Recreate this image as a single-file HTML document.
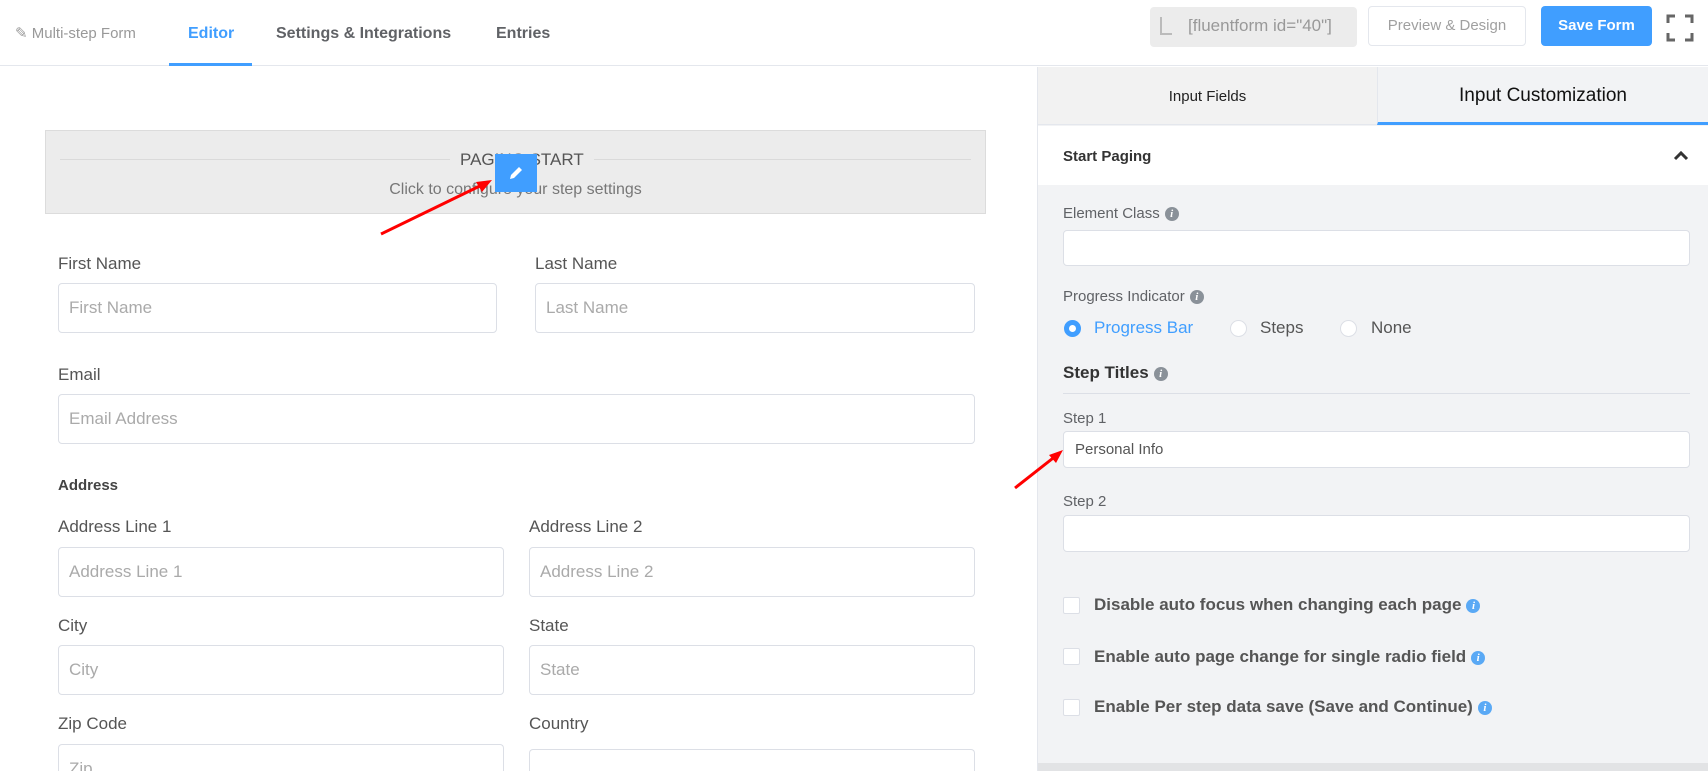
<!DOCTYPE html>
<html style="width:1708px;height:771px;overflow:hidden"><head><meta charset="utf-8"><style>
*{box-sizing:border-box;margin:0;padding:0}
body{width:1708px;height:771px;overflow:hidden;background:#fff;font-family:"Liberation Sans",sans-serif;position:relative;color:#606266}
.a{position:absolute}
.hdr{left:0;top:0;width:1708px;height:66px;border-bottom:1px solid #e4e7ed;background:#fff}
.nav{top:25px;font-size:16px;font-weight:bold;color:#606266}
.lbl{font-size:17px;color:#555}
.inp{border:1px solid #dcdfe6;border-radius:4px;background:#fff;font-size:17px;color:#aaa;padding-left:10px;display:flex;align-items:center}
.rp{left:1037px;top:67px;width:671px;height:704px;background:#f2f3f5;border-left:1px solid #e4e7ed}
.rl{font-size:15px;color:#606266}
.ri{border:1px solid #dcdfe6;border-radius:4px;background:#fff;font-size:15px;color:#555;padding-left:11px;display:flex;align-items:center}
.info{display:inline-block;width:14px;height:14px;border-radius:50%;background:#8a9199;color:#fff;font-size:11px;font-style:italic;font-weight:bold;text-align:center;line-height:14px;font-family:"Liberation Serif",serif;vertical-align:middle;margin-left:5px}
.infob{background:#5aa9f5}
.rad{width:17px;height:17px;border-radius:50%;border:1px solid #dcdfe6;background:#fff}
.cb{width:17px;height:17px;border:1px solid #dcdfe6;border-radius:2px;background:#fff}
.ct{font-size:17px;color:#555;font-weight:bold}
</style></head><body>
<div class="a hdr"></div>
<div class="a" style="left:15px;top:24px;font-size:15px;color:#999">✎ Multi-step Form</div>
<div class="a nav" style="left:188px;color:#409eff">Editor</div>
<div class="a" style="left:169px;top:63px;width:83px;height:3px;background:#409eff"></div>
<div class="a nav" style="left:276px">Settings &amp; Integrations</div>
<div class="a nav" style="left:496px">Entries</div>
<div class="a" style="left:1150px;top:7px;width:207px;height:40px;background:#ececec;border-radius:4px;font-size:17px;color:#999;padding:9px 0 0 38px">[fluentform id="40"]</div>
<div class="a" style="left:1160px;top:17px;width:12px;height:18px;border-left:2px solid #bbb;border-bottom:2px solid #bbb"></div>
<div class="a" style="left:1368px;top:6px;width:158px;height:40px;border:1px solid #e4e7ed;border-radius:4px;font-size:15px;color:#a0a0a0;text-align:center;line-height:38px">Preview &amp; Design</div>
<div class="a" style="left:1541px;top:6px;width:111px;height:40px;background:#409eff;border-radius:4px;font-size:15px;font-weight:bold;color:#fff;text-align:center;line-height:40px">Save Form</div>
<svg class="a" style="left:1666px;top:14px" width="28" height="28" viewBox="0 0 28 28"><path d="M2 9V2h7M19 2h7v7M26 19v7h-7M9 26H2v-7" fill="none" stroke="#666" stroke-width="3"/></svg>

<div class="a" style="left:45px;top:130px;width:941px;height:84px;background:#ececec;border:1px solid #dcdcdc"></div>
<div class="a" style="left:60px;top:159px;width:911px;height:1px;background:#dadada"></div>
<div class="a" style="left:450px;top:150px;background:#ececec;padding:0 10px;font-size:17px;color:#555">PAGING START</div>
<div class="a" style="left:0;top:181px;width:1031px;text-align:center;font-size:16px;color:#777">Click to configure your step settings</div>
<div class="a" style="left:495px;top:154px;width:42px;height:38px;background:#409eff"></div>
<svg class="a" style="left:506px;top:163px" width="20" height="20" viewBox="0 0 20 20"><path d="M4 16l1-4 8-8 3 3-8 8z" fill="#fff"/></svg>
<svg class="a" style="left:370px;top:170px" width="130" height="75"><path d="M11 64L118 12" stroke="#f00" stroke-width="3"/><path d="M122 10l-16 2 6 10z" fill="#f00"/></svg>

<div class="a lbl" style="left:58px;top:254px">First Name</div>
<div class="a inp" style="left:58px;top:283px;width:439px;height:50px">First Name</div>
<div class="a lbl" style="left:535px;top:254px">Last Name</div>
<div class="a inp" style="left:535px;top:283px;width:440px;height:50px">Last Name</div>
<div class="a lbl" style="left:58px;top:365px">Email</div>
<div class="a inp" style="left:58px;top:394px;width:917px;height:50px">Email Address</div>
<div class="a" style="left:58px;top:477px;font-size:15px;font-weight:bold;color:#444">Address</div>
<div class="a lbl" style="left:58px;top:517px">Address Line 1</div>
<div class="a inp" style="left:58px;top:547px;width:446px;height:50px">Address Line 1</div>
<div class="a lbl" style="left:529px;top:517px">Address Line 2</div>
<div class="a inp" style="left:529px;top:547px;width:446px;height:50px">Address Line 2</div>
<div class="a lbl" style="left:58px;top:616px">City</div>
<div class="a inp" style="left:58px;top:645px;width:446px;height:50px">City</div>
<div class="a lbl" style="left:529px;top:616px">State</div>
<div class="a inp" style="left:529px;top:645px;width:446px;height:50px">State</div>
<div class="a lbl" style="left:58px;top:714px">Zip Code</div>
<div class="a inp" style="left:58px;top:744px;width:446px;height:27px;align-items:flex-start;padding-top:14px;border-bottom:none;border-radius:4px 4px 0 0">Zip</div>
<div class="a lbl" style="left:529px;top:714px">Country</div>
<div class="a inp" style="left:529px;top:749px;width:446px;height:22px;border-bottom:none;border-radius:4px 4px 0 0"></div>

<div class="a rp"></div>
<div class="a" style="left:1038px;top:67px;width:339px;height:58px;background:#f2f2f2;border-bottom:1px solid #e4e7ed;font-size:15px;color:#222;text-align:center;line-height:60px">Input Fields</div>
<div class="a" style="left:1377px;top:67px;width:331px;height:58px;background:#f2f3f5;border-left:1px solid #e4e7ed;border-bottom:3px solid #409eff;font-size:19px;color:#111;text-align:center;line-height:58px">Input Customization</div>
<div class="a" style="left:1038px;top:126px;width:670px;height:59px;background:#fff"></div>
<div class="a" style="left:1063px;top:148px;font-size:15px;font-weight:bold;color:#333">Start Paging</div>
<svg class="a" style="left:1673px;top:149px" width="16" height="12"><path d="M2 10l6-6 6 6" fill="none" stroke="#333" stroke-width="3"/></svg>
<div class="a rl" style="left:1063px;top:205px">Element Class<span class="info">i</span></div>
<div class="a ri" style="left:1063px;top:230px;width:627px;height:36px"></div>
<div class="a rl" style="left:1063px;top:288px">Progress Indicator<span class="info">i</span></div>
<div class="a rad" style="left:1064px;top:320px;border:5px solid #409eff"></div>
<div class="a" style="left:1094px;top:318px;font-size:17px;color:#409eff">Progress Bar</div>
<div class="a rad" style="left:1230px;top:320px"></div>
<div class="a" style="left:1260px;top:318px;font-size:17px;color:#555">Steps</div>
<div class="a rad" style="left:1340px;top:320px"></div>
<div class="a" style="left:1371px;top:318px;font-size:17px;color:#555">None</div>
<div class="a" style="left:1063px;top:363px;font-size:17px;font-weight:bold;color:#333">Step Titles<span class="info">i</span></div>
<div class="a" style="left:1063px;top:393px;width:627px;height:1px;background:#dcdfe6"></div>
<div class="a rl" style="left:1063px;top:410px">Step 1</div>
<div class="a ri" style="left:1063px;top:431px;width:627px;height:37px">Personal Info</div>
<div class="a rl" style="left:1063px;top:493px">Step 2</div>
<div class="a ri" style="left:1063px;top:515px;width:627px;height:37px"></div>
<div class="a cb" style="left:1063px;top:597px"></div>
<div class="a ct" style="left:1094px;top:595px">Disable auto focus when changing each page<span class="info infob">i</span></div>
<div class="a cb" style="left:1063px;top:648px"></div>
<div class="a ct" style="left:1094px;top:647px">Enable auto page change for single radio field<span class="info infob">i</span></div>
<div class="a cb" style="left:1063px;top:699px"></div>
<div class="a ct" style="left:1094px;top:697px">Enable Per step data save (Save and Continue)<span class="info infob">i</span></div>
<div class="a" style="left:1038px;top:763px;width:670px;height:8px;background:#e2e3e5"></div>
<svg class="a" style="left:1010px;top:445px" width="60" height="50"><path d="M5 43L47 10" stroke="#f00" stroke-width="3"/><path d="M53 5l-14 5 7 8z" fill="#f00"/></svg>
</body></html>
